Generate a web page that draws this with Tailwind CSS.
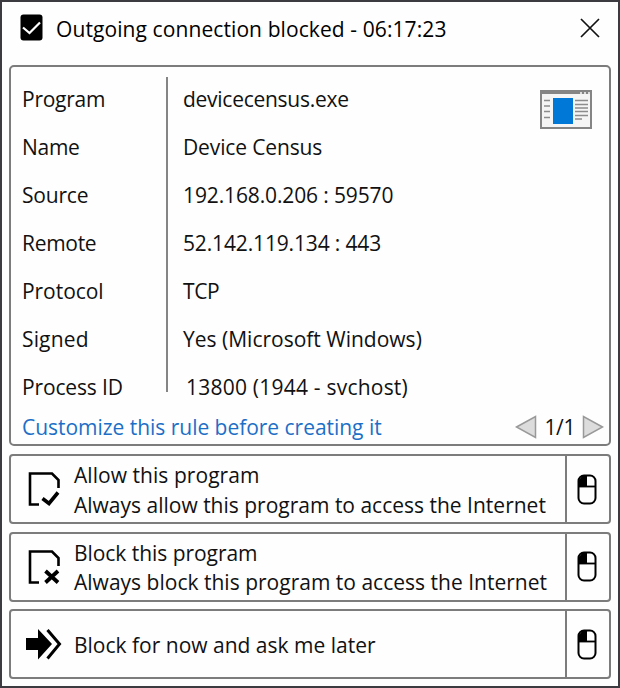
<!DOCTYPE html>
<html lang="en">
<head>
<meta charset="utf-8">
<title>Outgoing connection blocked</title>
<script src="https://cdn.jsdelivr.net/npm/@tailwindcss/browser@4"></script>
</head>
<body class="bg-white">
<main class="w-[620px] h-[688px] box-border border-2 border-[#3c3c40] bg-[#fefefe] flex flex-col overflow-hidden font-['Open_Sans','Noto_Sans',sans-serif] text-[21px] text-[#111] whitespace-nowrap tracking-[-0.4px]">
  <header class="h-[62px] shrink-0 flex items-start pl-[18px] pr-[18px]">
    <svg class="mt-[12px] w-[23px] h-[27px] shrink-0" viewBox="0 0 23 27"><rect x="0.5" y="0.5" width="22" height="26" rx="3" fill="#000"/><path d="M3 13.5 L9.5 19 L20 8.5" fill="none" stroke="#fff" stroke-width="2.2"/></svg>
    <h1 class="ml-[13px] mt-[13px] leading-[28px] text-black tracking-[0.09px]">Outgoing connection blocked - 06:17:23</h1>
    <svg class="ml-auto mt-[16px] w-[20px] h-[20px] shrink-0" viewBox="0 0 20 20"><path d="M1 1 L19 19 M19 1 L1 19" stroke="#111" stroke-width="1.7" fill="none"/></svg>
  </header>
  <section class="mx-[7px] mt-[1px] h-[381px] shrink-0 border-2 border-[#7c7c7c] rounded-[5px] flex flex-col">
    <div class="h-[343px] shrink-0 flex pt-[8px] pl-[11px] pr-[17px]">
      <div class="w-[144px] leading-[48px]">
        <div class="tracking-[-0.25px]">Program</div>
        <div class="tracking-[-0.3px]">Name</div>
        <div class="tracking-[-0.2px]">Source</div>
        <div class="tracking-[-0.3px]">Remote</div>
        <div class="tracking-[-0.05px]">Protocol</div>
        <div class="tracking-[0.15px]">Signed</div>
        <div class="tracking-[-0.15px]">Process ID</div>
      </div>
      <div class="w-[2px] h-[315px] mt-[2px] bg-[#858585]"></div>
      <div class="pl-[15px] leading-[48px]">
        <div class="tracking-[-0.27px]">devicecensus.exe</div>
        <div class="tracking-[-0.13px]">Device Census</div>
        <div class="tracking-[-0.13px]">192.168.0.206 : 59570</div>
        <div class="tracking-[-0.15px]">52.142.119.134 : 443</div>
        <div class="tracking-[-0.4px]">TCP</div>
        <div class="tracking-[0px]">Yes (Microsoft Windows)</div>
        <div class="pl-[3px] tracking-[0.22px]">13800 (1944 - svchost)</div>
      </div>
      <svg class="ml-auto mt-[15px] w-[52px] h-[39px]" viewBox="0 0 52 39">
        <rect x="1" y="1" width="50" height="37" fill="#f5f5f5" stroke="#858585" stroke-width="2"/>
        <rect x="0" y="0" width="52" height="4" fill="#858585"/>
        <path d="M40 3h2M44 3h2M48 3h2" stroke="#ddd" stroke-width="2"/>
        <rect x="13" y="8" width="20" height="26" fill="#0078d7"/>
        <path d="M4 10.5h6M4 16h6M4 21.5h6M4 27.5h6M35 10.5h13M35 14.5h13M35 18h13M35 21.5h13M35 25.5h13M35 29h7" stroke="#8c8c8c" stroke-width="1.6"/>
      </svg>
    </div>
    <div class="flex items-center pl-[11px] pr-[5px] leading-[34px]">
      <a class="text-[#1c6fc6] tracking-[-0.03px]">Customize this rule before creating it</a>
      <svg class="ml-auto w-[22px] h-[24px]" viewBox="0 0 22 24"><path d="M1.5 12 L20.5 1.5 V22.5 Z" fill="#dcdcdc" stroke="#999" stroke-width="1.5"/></svg>
      <span class="mx-[7px]">1/1</span>
      <svg class="w-[22px] h-[24px]" viewBox="0 0 22 24"><path d="M20.5 12 L1.5 1.5 V22.5 Z" fill="#dcdcdc" stroke="#999" stroke-width="1.5"/></svg>
    </div>
  </section>
  <div class="mx-[7px] mt-[8px] flex flex-col gap-[7.5px]">
    <div class="h-[70px] border-2 border-[#7c7c7c] rounded-[4px] flex">
      <svg class="ml-[13px] mt-[12px] w-[40px] h-[40px] shrink-0" viewBox="0 0 40 40" fill="none" stroke="#000"><path d="M15 36.5H6V5.5H28L34.5 12V20" stroke-width="2.6"/><path d="M18.5 30.5 L25 35.5 L34 24.5" stroke-width="3.6"/></svg>
      <div class="ml-[10px] mt-[5px] grow leading-[29.5px]"><div class="tracking-[0.05px]">Allow this program</div><div class="tracking-[0px]">Always allow this program to access the Internet</div></div>
      <div class="w-[44px] shrink-0 border-l-2 border-[#7c7c7c] flex items-center justify-center"><svg class="mr-[2px] w-[20px] h-[31px]" viewBox="0 0 20 31"><path d="M1 12V7L6 1H10V12Z" fill="#000"/><path d="M1.3 12.5H18.7" stroke="#000" stroke-width="1.8"/><rect x="1.5" y="1.5" width="17" height="28" rx="5.5" fill="none" stroke="#000" stroke-width="2"/></svg></div>
    </div>
    <div class="h-[70px] border-2 border-[#7c7c7c] rounded-[4px] flex">
      <svg class="ml-[13px] mt-[12px] w-[40px] h-[40px] shrink-0" viewBox="0 0 40 40" fill="none" stroke="#000"><path d="M15 36.5H6V5.5H28L34.5 12V20" stroke-width="2.6"/><path d="M21.5 25 L34 36.5 M34 25 L21.5 36.5" stroke-width="3.8"/></svg>
      <div class="ml-[10px] mt-[5px] grow leading-[29.5px]"><div class="tracking-[-0.05px]">Block this program</div><div class="tracking-[0.01px]">Always block this program to access the Internet</div></div>
      <div class="w-[44px] shrink-0 border-l-2 border-[#7c7c7c] flex items-center justify-center"><svg class="mr-[2px] w-[20px] h-[31px]" viewBox="0 0 20 31"><path d="M1 12V7L6 1H10V12Z" fill="#000"/><path d="M1.3 12.5H18.7" stroke="#000" stroke-width="1.8"/><rect x="1.5" y="1.5" width="17" height="28" rx="5.5" fill="none" stroke="#000" stroke-width="2"/></svg></div>
    </div>
    <div class="h-[70px] border-2 border-[#7c7c7c] rounded-[4px] flex">
      <svg class="ml-[13px] mt-[13px] w-[40px] h-[40px] shrink-0" viewBox="0 0 40 40"><path d="M2 14H14V5L28 20L14 35.5V26H2Z" fill="#000"/><path d="M23.5 6 L35.5 20 L23.5 34.5" fill="none" stroke="#000" stroke-width="3"/></svg>
      <div class="ml-[10px] grow leading-[69px] tracking-[0px]">Block for now and ask me later</div>
      <div class="w-[44px] shrink-0 border-l-2 border-[#7c7c7c] flex items-center justify-center"><svg class="mr-[2px] w-[20px] h-[31px]" viewBox="0 0 20 31"><path d="M1 12V7L6 1H10V12Z" fill="#000"/><path d="M1.3 12.5H18.7" stroke="#000" stroke-width="1.8"/><rect x="1.5" y="1.5" width="17" height="28" rx="5.5" fill="none" stroke="#000" stroke-width="2"/></svg></div>
    </div>
  </div>
</main>
</body>
</html>
